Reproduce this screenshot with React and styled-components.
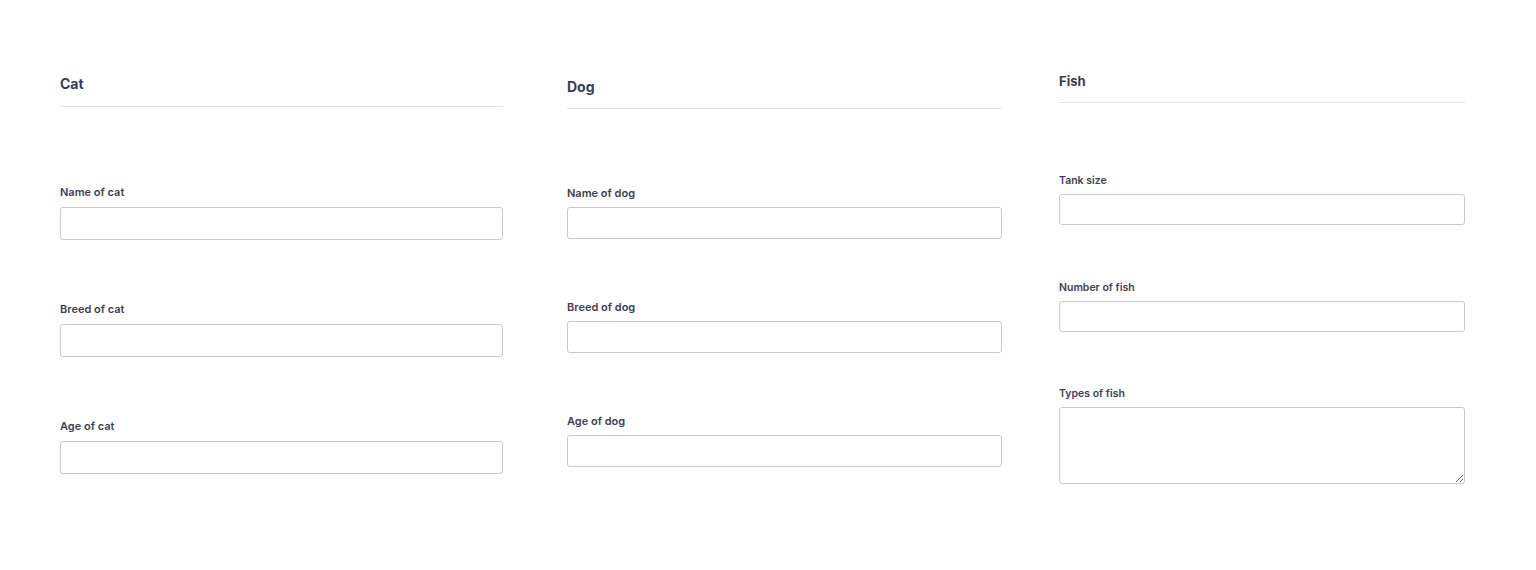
import styled, { createGlobalStyle } from "styled-components";

const GlobalStyle = createGlobalStyle`
  body {
    margin: 0;
    background: #ffffff;
    font-family: Inter, "Noto Sans", sans-serif;
    color: #3b3d55;
  }
`;

const forms = [
  {
    title: "Cat",
    width: 443,
    offset: 60,
    top: 74,
    headSize: 14,
    headLine: 20,
    headPad: 12,
    firstGap: 77,
    labelSize: 11,
    labelLine: 16,
    labelGap: 7,
    inputHeight: 33,
    fieldGap: 61,
    fields: [{ label: "Name of cat" }, { label: "Breed of cat" }, { label: "Age of cat" }],
  },
  {
    title: "Dog",
    width: 435,
    offset: 64,
    top: 77,
    headSize: 14,
    headLine: 20,
    headPad: 11,
    firstGap: 76,
    labelSize: 11,
    labelLine: 16,
    labelGap: 6,
    inputHeight: 32,
    fieldGap: 60,
    fields: [{ label: "Name of dog" }, { label: "Breed of dog" }, { label: "Age of dog" }],
  },
  {
    title: "Fish",
    width: 406,
    offset: 57,
    top: 72,
    headSize: 13,
    headLine: 18,
    headPad: 12,
    firstGap: 71,
    labelSize: 10.5,
    labelLine: 14,
    labelGap: 6,
    inputHeight: 31,
    fieldGap: 55.5,
    fields: [
      { label: "Tank size" },
      { label: "Number of fish" },
      { label: "Types of fish", multiline: true, height: 77 },
    ],
  },
];

const App = () => {
  return (
    <>
      <GlobalStyle />
      <Page>
        {forms.map((form) => (
          <Column key={form.title} $width={form.width} $offset={form.offset} $top={form.top}>
            <Heading $size={form.headSize} $line={form.headLine} $pad={form.headPad}>
              {form.title}
            </Heading>
            <Fields $first={form.firstGap} $gap={form.fieldGap}>
              {form.fields.map((field) => (
                <Field key={field.label} $gap={form.labelGap}>
                  <Label $size={form.labelSize} $line={form.labelLine}>
                    {field.label}
                  </Label>
                  {field.multiline ? (
                    <TextArea $height={field.height} />
                  ) : (
                    <Input type="text" $height={form.inputHeight} />
                  )}
                </Field>
              ))}
            </Fields>
          </Column>
        ))}
      </Page>
    </>
  );
};

export default App;

const Page = styled.main`
  display: flex;
  align-items: flex-start;
  width: 1536px;
  height: 570px;
  box-sizing: border-box;
`;

const Column = styled.section`
  width: ${(p) => p.$width}px;
  margin-left: ${(p) => p.$offset}px;
  padding-top: ${(p) => p.$top}px;
  display: flex;
  flex-direction: column;
`;

const Heading = styled.h2`
  margin: 0;
  font-size: ${(p) => p.$size}px;
  line-height: ${(p) => p.$line}px;
  font-weight: 700;
  color: #3a3c55;
  padding-bottom: ${(p) => p.$pad}px;
  border-bottom: 1px solid #e3e3eb;
`;

const Fields = styled.div`
  display: flex;
  flex-direction: column;
  gap: ${(p) => p.$gap}px;
  padding-top: ${(p) => p.$first}px;
`;

const Field = styled.label`
  display: flex;
  flex-direction: column;
  gap: ${(p) => p.$gap}px;
`;

const Label = styled.span`
  font-size: ${(p) => p.$size}px;
  line-height: ${(p) => p.$line}px;
  font-weight: 600;
  color: #3d3f57;
`;

const Input = styled.input`
  box-sizing: border-box;
  width: 100%;
  height: ${(p) => p.$height}px;
  margin: 0;
  border: 1px solid #c8c8d8;
  border-radius: 3px;
  background: #ffffff;
  outline: none;
  padding: 0 10px;
  font-family: inherit;
`;

const TextArea = styled.textarea`
  box-sizing: border-box;
  width: 100%;
  height: ${(p) => p.$height}px;
  margin: 0;
  border: 1px solid #c8c8d8;
  border-radius: 3px;
  background: #ffffff;
  outline: none;
  padding: 8px 10px;
  font-family: inherit;
  display: block;
`;
